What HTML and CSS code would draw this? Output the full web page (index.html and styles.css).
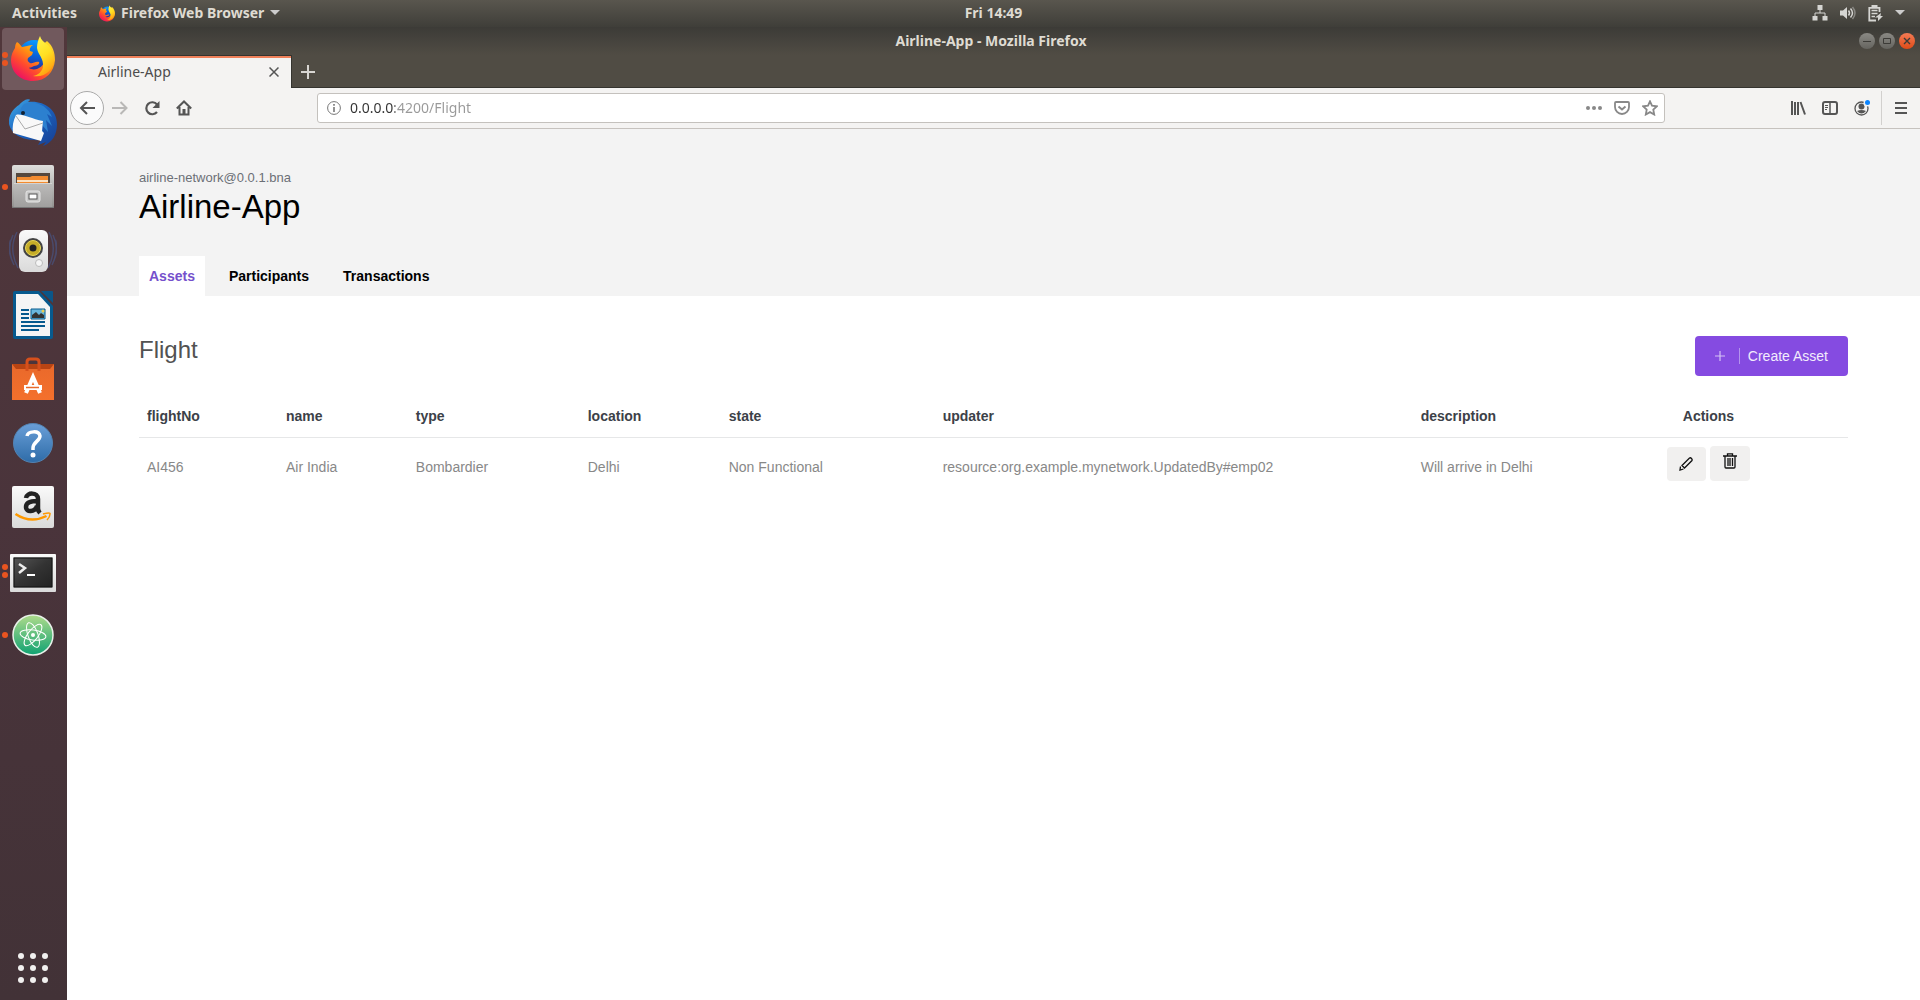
FILE: index.html
```html
<!DOCTYPE html>
<html lang="en">
<head>
<meta charset="utf-8">
<title>Airline-App</title>
<link rel="stylesheet" href="styles.css">
</head>
<body>
<svg class="defs" aria-hidden="true">
  <defs>
    <linearGradient id="fxBody" x1="0.85" y1="0.1" x2="0.2" y2="0.9"><stop offset="0" stop-color="#ffd52a"/><stop offset="0.4" stop-color="#ff9212"/><stop offset="0.7" stop-color="#ff4a2e"/><stop offset="1" stop-color="#ed1460"/></linearGradient>
    <linearGradient id="fxBlue" x1="0.6" y1="0" x2="0.4" y2="1"><stop offset="0" stop-color="#0a9dff"/><stop offset="0.5" stop-color="#0860d8"/><stop offset="1" stop-color="#372583"/></linearGradient>
    <linearGradient id="fxTail" x1="0.3" y1="0" x2="0.7" y2="1"><stop offset="0" stop-color="#fff44b"/><stop offset="0.5" stop-color="#ffdf22"/><stop offset="1" stop-color="#ff980e"/></linearGradient>
    <linearGradient id="grey" x1="0" y1="0" x2="0" y2="1"><stop offset="0" stop-color="#dededc"/><stop offset="1" stop-color="#92918f"/></linearGradient>
    <linearGradient id="drawer" x1="0" y1="0" x2="0" y2="1"><stop offset="0" stop-color="#bcbbba"/><stop offset="1" stop-color="#a09f9e"/></linearGradient>
    <linearGradient id="white" x1="0" y1="0" x2="0" y2="1"><stop offset="0" stop-color="#fafafa"/><stop offset="1" stop-color="#dadada"/></linearGradient>
    <linearGradient id="bird" x1="0" y1="0" x2="1" y2="1"><stop offset="0" stop-color="#46b2e8"/><stop offset="0.4" stop-color="#1c67c4"/><stop offset="1" stop-color="#173d91"/></linearGradient>
    <linearGradient id="orange" x1="0" y1="0" x2="0" y2="1"><stop offset="0" stop-color="#e9692b"/><stop offset="1" stop-color="#f4702c"/></linearGradient>
    <linearGradient id="help" x1="0" y1="0" x2="0" y2="1"><stop offset="0" stop-color="#6a9fd8"/><stop offset="1" stop-color="#2e6ca8"/></linearGradient>
    <linearGradient id="atom" x1="0" y1="0" x2="0" y2="1"><stop offset="0" stop-color="#aedb8b"/><stop offset="1" stop-color="#10a272"/></linearGradient>
    <linearGradient id="term" x1="0" y1="0" x2="1" y2="1"><stop offset="0" stop-color="#555"/><stop offset="0.5" stop-color="#333"/><stop offset="1" stop-color="#222"/></linearGradient>
    <symbol id="firefox" viewBox="0 0 44 46">
      <circle cx="23" cy="20" r="16" fill="url(#fxBlue)"/>
      <path d="M6 6 C8 7 10 10 11 11 L16 10 C19 9 21 9 22 9 C20 10 18 13 19 15 L22 16 L21 19 L17 22 C16 24 17 26 19 27 C22 28 24 25 28 26 C29 27 27 30 23 30 C20 32 19 31 18 32 C24 36 33 31 34 24 C35 18 32 15 28 12 L36 5 C42 10 44 17 44 24 C43 36 35 45 22 45 C9 45 0 36 0 24 C0 19 2 15 4 12 C4 9 5 7 6 6Z" fill="url(#fxBody)"/>
      <path d="M29 0 C27 4 26 8 26 12 C27 19 33 22 32 31 C31 35 28 39 22 40 C34 42 43 34 43 22 C42 16 40 12 37 9 C33 6 30 4 29 0Z" fill="url(#fxTail)"/>
    </symbol>
  </defs>
</svg>

<header class="topbar">
  <div class="topbar-left">
    <button class="bar-button" type="button">Activities</button>
    <button class="bar-button" type="button"><svg width="16" height="17"><use href="#firefox"/></svg>Firefox Web Browser<svg width="10" height="6" viewBox="0 0 10 6"><path d="M0 0h10L5 5z" fill="#ccc"/></svg></button>
  </div>
  <time class="clock">Fri 14:49</time>
  <div class="topbar-right">
    <svg width="16" height="16" viewBox="0 0 16 16" fill="#d5d5d2"><path d="M5.500 0h5v5h-5zM.5 11h5v4.500h-5zM10.500 11h5v4.500h-5z"/><path d="M8 5v3M3 11V8h10v3" fill="none" stroke="#d5d5d2"/></svg>
    <svg width="16" height="16" viewBox="0 0 16 16"><path d="M0 5.500h3L7 2v12l-4-3.500H0z" fill="#d5d5d2"/><path d="M8.500 5.500q2 2.500 0 5M10.500 3.500q4 4.500 0 9" fill="none" stroke="#d5d5d2" stroke-width="1.500"/><path d="M12.500 2q5 6 0 12" fill="none" stroke="#888782" stroke-width="1.500"/></svg>
    <svg width="15" height="17" viewBox="0 0 15 17"><path d="M11.500 7V2.800H1.300v12.700H8" fill="none" stroke="#d5d5d2" stroke-width="1.800"/><path d="M3.500 0h6v3h-6z" fill="#d5d5d2"/><path d="M3.500 5.500H9.500M3.500 8.500H9.500M3.500 11.500H7" stroke="#d5d5d2" stroke-width="1.500"/><path d="M13 8l-6 4.500h3V16l5-5h-2.500z" fill="#d5d5d2"/></svg>
    <svg width="10" height="6" viewBox="0 0 10 6"><path d="M0 0h10L5 5z" fill="#ccc"/></svg>
  </div>
</header>

<div class="desktop">
  <nav class="dock" aria-label="Applications">
    <button class="dock-item active" type="button" aria-label="Firefox"><span class="dots"><i></i><i></i></span>
      <svg width="44" height="46"><use href="#firefox"/></svg></button>
    <button class="dock-item" type="button" aria-label="Thunderbird">
      <svg width="48" height="48" viewBox="0 0 48 48"><path d="M10 6C16-1 21 0 21 1L19 3C34 1 48 10 48 25C48 36 43 44 34 47L37 43L29 46L32 41C18 42 3 38 0 25C-1 16 5 9 10 6Z" fill="url(#bird)"/><path d="M15 5c12-4 24 2 28 13l-5-3 5 12-6-6 2 12-6-7 1 12C29 24 24 20 12 18C11 13 11 9 15 5z" fill="#2c80cf"/><path d="M7 16C12 14 22 20 34 22L33 32L35 34L32 42L4 34C3 28 4 22 7 16z" fill="#f8f8f8"/><path d="M7 17L16 30L34 24" fill="none" stroke="#aaa"/><circle cx="14" cy="14" r="2" fill="#123"/></svg></button>
    <button class="dock-item" type="button" aria-label="Files"><span class="dots"><i></i></span>
      <svg width="42" height="44" viewBox="0 0 42 44"><rect width="42" height="43" rx="2" fill="url(#grey)"/><path d="M4 8h34v12H4z" fill="#55483e"/><path d="M5 12h13l2-1h16v7H5z" fill="#f28b30"/><path d="M5 15h31v2H5z" fill="#fbe2c3"/><path d="M2 18h38v24H2z" fill="url(#drawer)"/><path d="M2 18.500h38" stroke="#d4d3d2"/><path d="M0 42.500h42" stroke="#777"/><rect x="14" y="26" width="14" height="11" rx="2" fill="#c9c9c8" stroke="#e6e6e6"/><rect x="17" y="29" width="8" height="5" fill="#fff" stroke="#555"/></svg></button>
    <button class="dock-item" type="button" aria-label="Rhythmbox">
      <svg width="48" height="44" viewBox="0 0 48 44"><path d="M8 3q-9 17 1 36M4 6q-7 14 1 30M1.500 11q-3 9 1 19M40 3q9 17-1 36M44 6q7 14-1 30M46.500 11q3 9-1 19" fill="none" stroke="#4a4a6b" stroke-width="1.500"/><rect x="10" y="1" width="29" height="42" rx="6" fill="url(#white)"/><circle cx="24" cy="19" r="10" fill="#444"/><circle cx="24" cy="19" r="7.500" fill="#c6ad28" stroke="#e8d657"/><circle cx="24" cy="19" r="3.500" fill="#222"/><circle cx="30" cy="34" r="3.500" fill="#f5f5f5" stroke="#bbb"/></svg></button>
    <button class="dock-item" type="button" aria-label="LibreOffice Writer">
      <svg width="40" height="48" viewBox="0 0 40 48"><path d="M2 0h24l14 15v31q0 2-2 2H2q-2 0-2-2V2q0-2 2-2z" fill="#075a8e"/><path d="M28 0h11q1 0 1 1v11z" fill="#0b5688"/><path d="M3 3h22l12 13v29H3z" fill="#f5f5f5"/><path d="M8 19h8M8 23h8M8 27h8M8 31h24M8 35h24M8 39h18" stroke="#075a8e" stroke-width="2"/><path d="M18 18h14v10H18z" fill="#69b6dd" stroke="#075a8e"/><path d="M19 27v-3l4-3 3 3 2-2 3 2v3z" fill="#333"/><circle cx="30" cy="20" r="1.500" fill="#eacd52"/></svg></button>
    <button class="dock-item" type="button" aria-label="Ubuntu Software">
      <svg width="42" height="44" viewBox="0 0 42 44"><path d="M0 7h42v5H0z" fill="#b84413"/><path d="M0 7l4 5h34l4-5v36H0z" fill="url(#orange)"/><path d="M15 14V5q0-3 3-3h6q3 0 3 3v9" fill="none" stroke="#d6501c" stroke-width="3"/><path d="M14 36l7-16 7 16" fill="none" stroke="#fff" stroke-width="4"/><path d="M12 28h18v5H12z" fill="#fff"/><path d="M14 30.500h13" stroke="#e9692b" stroke-width="1.500"/></svg></button>
    <button class="dock-item" type="button" aria-label="Help">
      <svg width="40" height="40" viewBox="0 0 40 40"><circle cx="20" cy="20" r="19.500" fill="url(#help)" stroke="#5383b2"/><path d="M14 13c1-5 12-6 13 0c0 5-7 6-7 12v2" fill="none" stroke="#fff" stroke-width="3.500"/><circle cx="20" cy="32" r="2.500" fill="#fff"/></svg></button>
    <button class="dock-item" type="button" aria-label="Amazon">
      <svg width="42" height="42" viewBox="0 0 42 42"><rect width="42" height="42" rx="2" fill="url(#white)"/><path d="M14 12c1-6 12-6 12 1v9q0 3 2 5M25 15c-7 0-11 2-11 6c0 6 9 5 11-1" fill="none" stroke="#222" stroke-width="4.500"/><path d="M3.500 28q15 10 31 2" fill="none" stroke="#f90" stroke-width="2.500"/><path d="M31 28q8-2 7 0q0 3-3 6" fill="none" stroke="#f90" stroke-width="1.500"/></svg></button>
    <button class="dock-item terminal" type="button" aria-label="Terminal"><span class="dots"><i></i><i></i></span>
      <svg width="46" height="38" viewBox="0 0 46 38"><rect width="46" height="38" rx="1" fill="url(#white)"/><path d="M3 3h40v31H3z" fill="#aaa"/><path d="M4 4h38v29H4z" fill="url(#term)" stroke="#111"/><path d="M9 10l6 4-6 5" fill="none" stroke="#eee" stroke-width="2.500"/><path d="M17 21h8" stroke="#fff" stroke-width="2"/></svg></button>
    <button class="dock-item" type="button" aria-label="Atom"><span class="dots"><i></i></span>
      <svg width="42" height="42" viewBox="0 0 42 42"><circle cx="21" cy="21" r="20" fill="url(#atom)" stroke="#e9f1ea" stroke-width="1.500"/><g fill="none" stroke="#fff"><ellipse cx="21" cy="21" rx="5" ry="13" transform="rotate(-20 21 21)"/><ellipse cx="21" cy="21" rx="5" ry="13" transform="rotate(38 21 21)"/><ellipse cx="21" cy="21" rx="5" ry="13" transform="rotate(98 21 21)"/></g><circle cx="21" cy="21" r="2" fill="#fff"/></svg></button>
    <button class="dock-item apps" type="button" aria-label="Show Applications">
      <svg width="30" height="30" viewBox="0 0 30 30" fill="#f1f0ef"><circle cx="3" cy="3" r="3"/><circle cx="15" cy="3" r="3"/><circle cx="27" cy="3" r="3"/><circle cx="3" cy="15" r="3"/><circle cx="15" cy="15" r="3"/><circle cx="27" cy="15" r="3"/><circle cx="3" cy="27" r="3"/><circle cx="15" cy="27" r="3"/><circle cx="27" cy="27" r="3"/></svg></button>
  </nav>

  <div class="window">
    <div class="titlebar">
      <span class="window-title">Airline-App - Mozilla Firefox</span>
      <div class="window-controls">
        <button type="button" aria-label="Minimize"><svg width="8" height="8" viewBox="0 0 8 8"><path d="M0 4.500h8" stroke="#3c3b37"/></svg></button>
        <button type="button" aria-label="Maximize"><svg width="8" height="8" viewBox="0 0 8 8"><path d="M.5 1.500h7v5h-7z" fill="none" stroke="#3c3b37"/></svg></button>
        <button class="close" type="button" aria-label="Close"><svg width="8" height="8" viewBox="0 0 8 8"><path d="M1 1l6 6M7 1L1 7" stroke="#3c3b37" stroke-width="1.400"/></svg></button>
      </div>
    </div>
    <div class="tabstrip">
      <div class="browser-tab"><span>Airline-App</span><button type="button" aria-label="Close tab"><svg width="10" height="10" viewBox="0 0 10 10"><path d="M.5.5l9 9M9.500.5l-9 9" stroke="#555" stroke-width="1.500"/></svg></button></div>
      <button class="new-tab" type="button" aria-label="New tab"><svg width="14" height="14" viewBox="0 0 14 14"><path d="M7 0v14M0 7h14" stroke="#d8d6d2" stroke-width="2"/></svg></button>
    </div>
    <div class="toolbar">
      <div class="nav-buttons">
        <button class="back" type="button" aria-label="Back"><svg width="16" height="16" viewBox="0 0 16 16"><path d="M8 2L2 8l6 6M2 8h14" fill="none" stroke="#555" stroke-width="2"/></svg></button>
        <button type="button" aria-label="Forward"><svg width="16" height="16" viewBox="0 0 16 16"><path d="M8.500 2l6 6-6 6M14 8H0" fill="none" stroke="#b9b8b7" stroke-width="2"/></svg></button>
        <button type="button" aria-label="Reload"><svg width="16" height="16" viewBox="0 0 16 16"><path d="M13 4.500A6 6 0 1 0 13 12" fill="none" stroke="#555" stroke-width="2.200"/><path d="M15.500 1v7h-7z" fill="#555"/></svg></button>
        <button type="button" aria-label="Home"><svg width="16" height="16" viewBox="0 0 16 16"><path d="M.8 8.500L8 1.500l7.200 7M3.500 7v7.500h9V7" fill="none" stroke="#555" stroke-width="2"/><path d="M6.500 9h3v5h-3z" fill="#555"/></svg></button>
      </div>
      <div class="urlbar">
        <svg width="14" height="14" viewBox="0 0 14 14"><circle cx="7" cy="7" r="6.400" fill="none" stroke="#777"/><path d="M6.200 3h1.600v1.700H6.200zM6.200 6h1.600v5H6.200z" fill="#777"/></svg>
        <input type="text" value="0.0.0.0:4200/Flight" aria-label="Address">
        <button type="button" aria-label="Page actions"><svg width="16" height="4" viewBox="0 0 16 4" fill="#888"><circle cx="2" cy="2" r="2"/><circle cx="8" cy="2" r="2"/><circle cx="14" cy="2" r="2"/></svg></button>
        <button type="button" aria-label="Save to Pocket"><svg width="16" height="16" viewBox="0 0 16 16" fill="none" stroke="#888" stroke-width="1.800"><path d="M2 2h12q1 0 1 1v4a7 7 0 0 1-14 0V3q0-1 1-1z"/><path d="M4.500 6.500L8 9.500l3.500-3" stroke-width="2"/></svg></button>
        <button type="button" aria-label="Bookmark"><svg width="16" height="16" viewBox="0 0 16 16"><path d="M8 1.300l2 4.400 4.800.6-3.500 3.300.9 4.900L8 12.100l-4.200 2.400.9-4.900L1.200 6.300 6 5.700z" fill="none" stroke="#888" stroke-width="1.800"/></svg></button>
      </div>
      <div class="tools">
        <button type="button" aria-label="Library"><svg width="16" height="16" viewBox="0 0 16 16" stroke="#555" stroke-width="2"><path d="M2 1v14M5 2v13M8 2v13M10.500 2l4.500 12.500"/></svg></button>
        <button type="button" aria-label="Sidebars"><svg width="16" height="16" viewBox="0 0 16 16" fill="none" stroke="#555"><rect x="1" y="2" width="14" height="12" rx="2" stroke-width="2"/><path d="M8 2v12" stroke-width="1.500"/><path d="M3 5.500h3M3 7.500h3M3 9.500h2"/></svg></button>
        <button type="button" aria-label="Account"><svg width="16" height="16" viewBox="0 0 16 16"><circle cx="7.500" cy="8.500" r="6.500" fill="none" stroke="#555" stroke-width="1.300"/><circle cx="7.500" cy="6.500" r="3" fill="#555"/><path d="M3 11q4.500-2 9 0q-4.500 5-9 0z" fill="#555"/><circle cx="13" cy="3" r="3.500" fill="#f4f3f2"/><circle cx="13.500" cy="2.500" r="2.500" fill="#0a84ff"/></svg></button>
        <button class="menu" type="button" aria-label="Menu"><svg width="12" height="12" viewBox="0 0 12 12"><path d="M0 1h12M0 6h12M0 11h12" stroke="#555" stroke-width="2"/></svg></button>
      </div>
    </div>

    <main class="page">
      <div class="banner">
        <p class="network">airline-network@0.0.1.bna</p>
        <h1>Airline-App</h1>
        <nav class="menu-tabs">
          <a class="current" href="#assets">Assets</a>
          <a href="#participants">Participants</a>
          <a href="#transactions">Transactions</a>
        </nav>
      </div>
      <section class="content">
        <div class="content-head">
          <h2>Flight</h2>
          <button class="create" type="button"><svg width="10" height="10" viewBox="0 0 10 10"><path d="M5 0v10M0 5h10" stroke="#d5c2f6" stroke-width="1.200"/></svg><span>Create Asset</span></button>
        </div>
        <table>
          <colgroup><col class="c-no"><col class="c-name"><col class="c-type"><col class="c-location"><col class="c-state"><col class="c-updater"><col class="c-description"><col></colgroup>
          <thead><tr><th>flightNo</th><th>name</th><th>type</th><th>location</th><th>state</th><th>updater</th><th>description</th><th class="actions-head">Actions</th></tr></thead>
          <tbody><tr><td>AI456</td><td>Air India</td><td>Bombardier</td><td>Delhi</td><td>Non Functional</td><td>resource:org.example.mynetwork.UpdatedBy#emp02</td><td>Will arrive in Delhi</td>
            <td class="actions"><div>
              <button type="button" aria-label="Edit"><svg width="14" height="14" viewBox="0 0 14 14" fill="none" stroke="#111" stroke-width="1.300"><path d="M3 8.500L10.500 1q1-.6 2 .5t.5 2L5.500 11z"/><path d="M1.500 9.500L1 13l3.500-1"/></svg></button>
              <button class="delete" type="button" aria-label="Delete"><svg width="14" height="16" viewBox="0 0 14 16" fill="none" stroke="#111" stroke-width="1.300"><path d="M0 3h14M4.500 3V.8h5V3M2 3v11q0 1 1 1h8q1 0 1-1V3M5 5v8M7 5v8M9.500 5v8"/></svg></button>
            </div></td></tr></tbody>
        </table>
      </section>
    </main>
  </div>
</div>
</body>
</html>
```
FILE: styles.css
```css
* { box-sizing: border-box; }

body {
  margin: 0;
  min-height: 100vh;
  display: flex;
  flex-direction: column;
  background: #fff;
  font-family: "Liberation Sans", Arial, sans-serif;
  font-size: 14px;
}

button {
  margin: 0;
  padding: 0;
  border: 0;
  background: none;
  font: inherit;
  color: inherit;
  display: flex;
  align-items: center;
  justify-content: center;
}

svg { display: block; flex: none; }
.defs { position: absolute; width: 0; height: 0; }

/* Desktop top bar */
.topbar {
  display: grid;
  grid-template-columns: 1fr auto 1fr;
  align-items: center;
  height: 27px;
  padding: 0 15px 1px 12px;
  background: linear-gradient(#59564e, #3f3e39);
  color: #dfdbd2;
  font: bold 14px/20px "Noto Sans", sans-serif;
}
.topbar-left { display: flex; gap: 22px; }
.bar-button { gap: 6px; }
.clock { padding-left: 70px; }
.topbar-right { display: flex; align-items: center; justify-content: flex-end; gap: 12px; }

.desktop { flex: 1; display: flex; }

/* Dock */
.dock {
  width: 67px;
  flex: none;
  display: flex;
  flex-direction: column;
  gap: 2px;
  padding: 1px 3px 1px 2px;
  background: linear-gradient(#51373b, #4a343b 50%, #423237);
}
.dock-item {
  position: relative;
  width: 62px;
  height: 62px;
  border-radius: 4px;
}
.dock-item.active { background: #71595d; }
.dock-item.terminal { padding-top: 3px; }
.dots {
  position: absolute;
  left: 0;
  top: 0;
  height: 100%;
  display: flex;
  flex-direction: column;
  justify-content: center;
  gap: 2px;
}
.dots i { width: 6px; height: 6px; border-radius: 50%; background: #e95420; }
.apps { margin-top: auto; }

/* Browser window */
.window { flex: 1; min-width: 0; display: flex; flex-direction: column; }
.titlebar {
  display: grid;
  grid-template-columns: 1fr auto 1fr;
  align-items: center;
  height: 28px;
  padding-right: 5px;
  background: linear-gradient(#3c3b37, #504c44);
  color: #dfdbd2;
  font: bold 14px/20px "Noto Sans", sans-serif;
}
.window-title { grid-column: 2; }
.window-controls { display: flex; justify-content: flex-end; gap: 4px; }
.window-controls button {
  width: 16px;
  height: 16px;
  border-radius: 50%;
  background: linear-gradient(#8a8984, #65645f);
}
.window-controls .close { background: linear-gradient(#f47b55, #df4b17); }

.tabstrip {
  display: flex;
  height: 33px;
  background: #504c44;
  box-shadow: inset 0 -1px #35342f;
  font: 14px/20px "Noto Sans", sans-serif;
}
.browser-tab {
  width: 225px;
  display: flex;
  align-items: center;
  justify-content: space-between;
  padding: 0 12px 0 31px;
  border-top: 1px solid #35342f;
  border-right: 1px solid #35342f;
  background: #f4f3f2;
  box-shadow: inset 0 2px #f0815a;
  color: #4c4c4c;
}
.new-tab { width: 32px; }

.toolbar {
  display: flex;
  align-items: center;
  height: 41px;
  border-bottom: 1px solid #c6c2be;
  background: #f4f3f2;
}
.nav-buttons { width: 250px; flex: none; display: flex; align-items: center; padding-left: 3px; }
.nav-buttons button { width: 32px; height: 34px; }
.nav-buttons .back { width: 34px; border: 1px solid #aaa; border-radius: 50%; background: #fbfbfb; }
.urlbar {
  flex: 1;
  height: 30px;
  display: flex;
  align-items: center;
  gap: 12px;
  padding: 0 6px 0 9px;
  border: 1px solid #c4c1bd;
  border-radius: 3px;
  background: #fff;
}
.urlbar svg + input { margin-left: -3px; }
.urlbar input {
  flex: 1;
  min-width: 0;
  padding: 0;
  border: 0;
  outline: 0;
  font: 14px/20px "Noto Sans", sans-serif;
  color: transparent;
  background: linear-gradient(90deg, #333 45px, #999 45px);
  -webkit-background-clip: text;
  background-clip: text;
}
.tools { width: 255px; flex: none; display: flex; justify-content: flex-end; }
.tools button { width: 32px; height: 34px; }
.tools .menu { width: 39px; margin-left: 3px; border-left: 1px solid #d2d0ce; }

/* Airline application */
.page { flex: 1; background: #fff; }
.banner { padding: 41px 72px 0; background: #f3f3f3; }
.network { margin: 0; font-size: 13px; line-height: 16px; color: #6b6f76; }
h1 { margin: 0; font-size: 33px; font-weight: 400; line-height: 41px; color: #000; }
.menu-tabs { display: flex; gap: 14px; padding-top: 29px; }
.menu-tabs a {
  padding: 0 10px;
  line-height: 40px;
  font-weight: 700;
  color: #000;
  text-decoration: none;
}
.menu-tabs .current { background: #fff; color: #7550cc; }

.content { padding: 40px 72px; }
.content-head { display: flex; justify-content: space-between; align-items: flex-start; }
h2 { margin: 0; font-size: 24px; font-weight: 400; line-height: 28px; color: #525252; }
.create {
  height: 40px;
  gap: 14px;
  padding: 0 20px;
  border-radius: 4px;
  background: #854be1;
  color: #f2ecfc;
}
.create span { padding-left: 8px; border-left: 1px solid #b494ee; line-height: 16px; }

table {
  width: 100%;
  margin-top: 20px;
  border-collapse: collapse;
  table-layout: fixed;
}
.c-no { width: 8.13%; }
.c-name { width: 7.6%; }
.c-type { width: 10.06%; }
.c-location { width: 8.25%; }
.c-state { width: 12.52%; }
.c-updater { width: 27.97%; }
.c-description { width: 14.4%; }
th {
  height: 41px;
  padding: 0 8px;
  border-bottom: 1px solid #e6e7e8;
  text-align: left;
  color: #3c4148;
}
td { height: 59px; padding: 0 8px; color: #888; white-space: nowrap; }
th.actions-head { padding-left: 24px; }
td.actions { padding-top: 8px; vertical-align: top; }
.actions div { display: flex; align-items: flex-end; gap: 4px; }
.actions button { width: 39px; height: 34px; border-radius: 4px; background: #f1f0ef; }
.actions .delete { width: 40px; height: 35px; padding-bottom: 4px; }
```
